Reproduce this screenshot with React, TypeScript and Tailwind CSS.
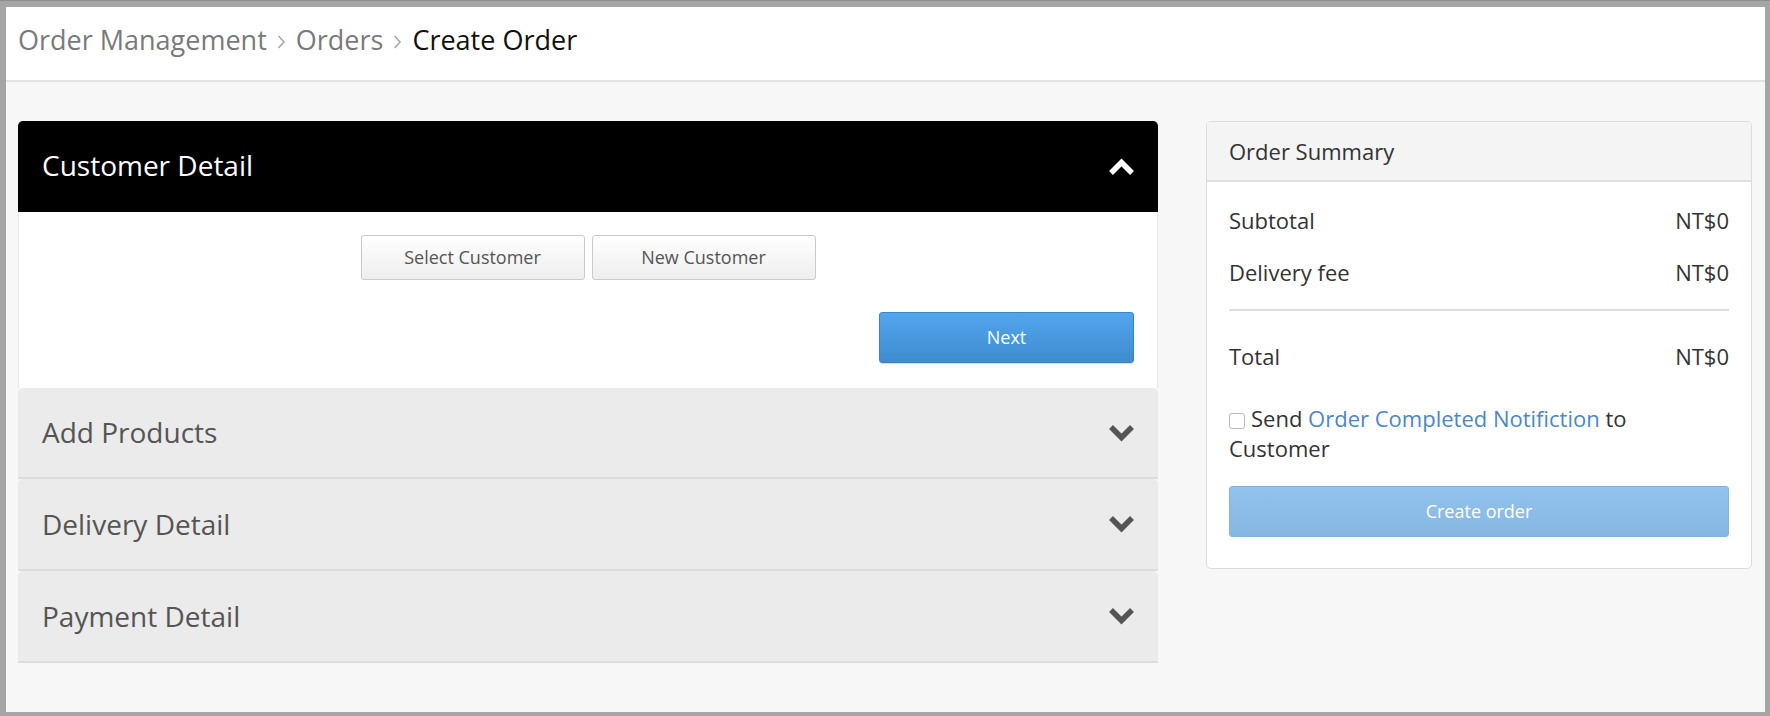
import React from "react";

const Chevron = ({ up, color }: { up?: boolean; color: string }) => (
  <svg width="27" height="18" viewBox="0 0 27 18" className="block">
    <polyline
      points={up ? "3,15 13.5,4.5 24,15" : "3,3 13.5,13.5 24,3"}
      fill="none"
      stroke={color}
      strokeWidth="5.5"
      strokeLinejoin="miter"
    />
  </svg>
);

const Sep = () => (
  <svg width="9" height="16" viewBox="0 0 9 16" className="mx-[10px] mt-[3px]">
    <polyline points="1.5,2 7,8 1.5,14" fill="none" stroke="#a8a8a8" strokeWidth="1.6" />
  </svg>
);

const Section = ({ title, tall }: { title: string; tall?: boolean }) => (
  <div
    className={
      tall
        ? "h-[92px] bg-[#ebebeb] rounded-t-[5px] border-b-2 border-[#dcdcdc] flex items-center justify-between pl-[24px] pr-[23px]"
        : "h-[91px] bg-[#ebebeb] rounded-t-[5px] border-b-2 border-[#dcdcdc] flex items-center justify-between pl-[24px] pr-[23px]"
    }
  >
    <span className="text-[28px] text-[#555] pb-[1px]">{title}</span>
    <Chevron color="#555" />
  </div>
);

export default function App() {
  return (
    <div
      className="w-[1770px] h-[716px] bg-[#a5a5a5] pt-[6px] pl-[6px] pr-[5px] pb-[4px] border-t border-[#8e8e8e]"
      style={{ fontFamily: '"Open Sans", "Liberation Sans", sans-serif' }}
    >
      <div className="h-full bg-[#f7f7f7] flex flex-col">
        <div className="h-[75px] bg-white border-b-2 border-[#e2e2e2] flex items-center pl-[12px] pb-[6px] shrink-0">
          <span className="text-[27px] text-[#7a7a7a]">Order Management</span>
          <Sep />
          <span className="text-[27px] text-[#7a7a7a]">Orders</span>
          <Sep />
          <span className="text-[27px] text-[#111]">Create Order</span>
        </div>
        <div className="flex pl-[12px] pt-[39px] gap-[48px]">
          <div className="w-[1140px] flex flex-col">
            <div className="h-[91px] bg-black rounded-t-[5px] flex items-center justify-between pl-[24px] pr-[23px]">
              <span className="text-[28px] text-white pb-[3px]">Customer Detail</span>
              <Chevron up color="#fff" />
            </div>
            <div className="h-[176px] bg-white border-x border-[#e6e6e6] flex flex-col pt-[23px] pr-[23px]">
              <div className="flex justify-center gap-[7px] pl-[23px]">
                <button className="w-[224px] h-[45px] rounded-[3px] border border-[#cacaca] bg-gradient-to-b from-[#ffffff] to-[#eeeeee] text-[18px] text-[#555] pb-[1px]">
                  Select Customer
                </button>
                <button className="w-[224px] h-[45px] rounded-[3px] border border-[#cacaca] bg-gradient-to-b from-[#ffffff] to-[#eeeeee] text-[18px] text-[#555] pb-[1px]">
                  New Customer
                </button>
              </div>
              <div className="flex justify-end mt-[32px]">
                <button className="w-[255px] h-[51px] rounded-[3px] border border-[#3b85c6] bg-gradient-to-b from-[#52a5ee] to-[#3f8ccf] text-[18px] text-white shadow-[0_1px_1px_rgba(0,0,0,0.15)] pb-[1px]">
                  Next
                </button>
              </div>
            </div>
            <Section title="Add Products" />
            <Section title="Delivery Detail" tall />
            <Section title="Payment Detail" tall />
          </div>
          <div className="w-[546px] self-start bg-white border border-[#dcdcdc] rounded-[5px] overflow-hidden">
            <div className="h-[60px] bg-[#f4f4f4] border-b-2 border-[#e0e0e0] flex items-center px-[22px]">
              <span className="text-[22px] text-[#333]">Order Summary</span>
            </div>
            <div className="px-[22px] pt-[23px] pb-[31px] text-[22px] text-[#333] leading-[30px]">
              <div className="flex justify-between">
                <span>Subtotal</span>
                <span>NT$0</span>
              </div>
              <div className="flex justify-between mt-[22px]">
                <span>Delivery fee</span>
                <span>NT$0</span>
              </div>
              <div className="h-[2px] bg-[#dedede] mt-[22px]" />
              <div className="flex justify-between mt-[30px]">
                <span>Total</span>
                <span>NT$0</span>
              </div>
              <p className="mt-[32px]">
                <span className="inline-block w-[16px] h-[16px] border border-[#bbb] rounded-[3px] bg-white align-[-2px] mr-[6px]" />
                Send <a className="text-[#4a88c9]">Order Completed Notifiction</a> to Customer
              </p>
              <button className="mt-[23px] w-full h-[51px] rounded-[3px] border border-[#82b4e0] bg-gradient-to-b from-[#92c3ef] to-[#86b7e2] text-[18px] text-white pb-[1px]">
                Create order
              </button>
            </div>
          </div>
        </div>
      </div>
    </div>
  );
}
